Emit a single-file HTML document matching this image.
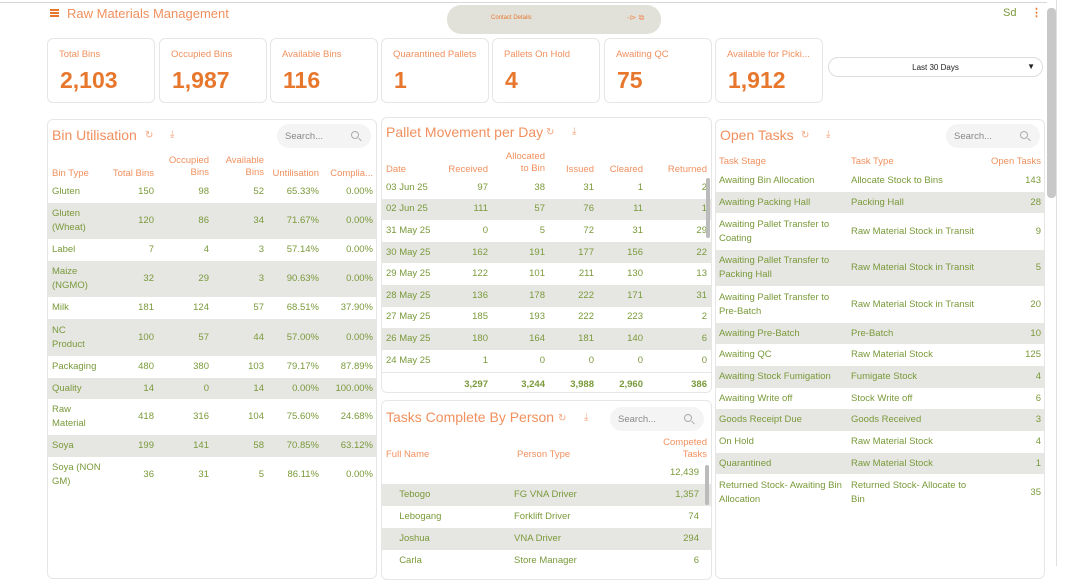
<!DOCTYPE html>
<html><head><meta charset="utf-8"><style>
*{box-sizing:border-box;margin:0;padding:0}
body{width:1069px;height:566px;overflow:hidden;background:#fff;font-family:"Liberation Sans",sans-serif;position:relative;color:#7a9a3a;font-size:9.5px}
.a{position:absolute}
.o{color:#f0905e}
.card{position:absolute;top:38px;height:65px;border:1px solid #e6e6e6;border-radius:6px;background:#fff}
.card .l{position:absolute;left:11px;top:10px;font-size:9.5px;color:#f0905e;white-space:nowrap}
.card .n{position:absolute;left:12px;top:28px;font-size:23px;font-weight:bold;color:#e8772e}
.panel{position:absolute;border:1px solid #e6e6e6;border-radius:6px;background:#fff;overflow:hidden}
.title{position:absolute;font-size:14px;color:#f0905e}
.search{position:absolute;width:94px;height:24px;border-radius:12px;background:#f4f4f4;font-size:9.5px;color:#888;padding:7px 0 0 8px}
.search:after{content:"";position:absolute;right:12px;top:7px;width:6px;height:6px;border:1px solid #aaa;border-radius:50%}
.search:before{content:"";position:absolute;right:9px;top:15px;width:4px;height:1px;background:#aaa;transform:rotate(45deg)}
.row{position:absolute;left:0;right:0}
.g{background:#e6e6e3}
.c{position:absolute;white-space:nowrap;line-height:14px}
.h{color:#f0905e}
.ic{position:absolute;font-size:10px;color:#f4a27a}
.ham{position:absolute;left:50px;width:9px;height:2px;background:#e8772e}
</style></head><body>
<div class="a" style="left:0;top:2px;width:1047px;height:1px;background:#d8d8d8"></div>
<div class="ham" style="top:9px"></div><div class="ham" style="top:12px"></div><div class="ham" style="top:15px"></div>
<div class="a o" style="left:67px;top:6px;font-size:13px">Raw Materials Management</div>
<div class="a" style="left:447px;top:5px;width:214px;height:29px;border-radius:14px;background:#e1e1d9"></div>
<div class="a" style="left:491px;top:15px;font-size:6px;color:#e8772e">Contact Details</div>
<div class="a" style="left:627px;top:13px;font-size:8px;color:#f0905e">-⊳ ⧉</div>
<div class="a" style="left:1003px;top:7px;font-size:11px;color:#7a9a3a">Sd</div>
<div class="a" style="left:1031px;top:6px;font-size:11px;color:#e8772e;font-weight:bold">⋮</div>
<div class="a" style="left:1047px;top:8px;width:9px;height:190px;background:#c8c8c8;border-radius:4px"></div>
<div class="a" style="left:1056px;top:0;width:1px;height:566px;background:#e0e0e0"></div>

<div class="card" style="left:47px;width:108px"><div class="l">Total Bins</div><div class="n">2,103</div></div>
<div class="card" style="left:159px;width:108px"><div class="l">Occupied Bins</div><div class="n">1,987</div></div>
<div class="card" style="left:270px;width:108px"><div class="l">Available Bins</div><div class="n">116</div></div>
<div class="card" style="left:381px;width:108px"><div class="l">Quarantined Pallets</div><div class="n">1</div></div>
<div class="card" style="left:492px;width:108px"><div class="l">Pallets On Hold</div><div class="n">4</div></div>
<div class="card" style="left:604px;width:108px"><div class="l">Awaiting QC</div><div class="n">75</div></div>
<div class="card" style="left:715px;width:108px"><div class="l">Available for Picki...</div><div class="n">1,912</div></div>
<div class="a" style="left:828px;top:57px;width:215px;height:20px;border:1px solid #ddd;border-radius:10px;font-size:8px;color:#222;text-align:center;padding-top:5px">Last 30 Days<span style="position:absolute;right:7px;top:4px;font-size:8px">&#9660;</span></div>

<div class="panel" style="left:47px;top:119px;width:330px;height:460px">
<div class="title" style="left:4px;top:7px">Bin Utilisation</div>
<div class="ic" style="left:97px;top:10px">↻</div><div class="ic" style="left:122px;top:9px">⤓</div>
<div class="search" style="left:229px;top:4px">Search...</div>
<div class="c h" style="left:4px;top:47px">Bin Type</div>
<div class="c h" style="right:222px;top:47px;text-align:right">Total Bins</div>
<div class="c h" style="right:167px;top:35px;line-height:12px;text-align:right">Occupied<br>Bins</div>
<div class="c h" style="right:112px;top:35px;line-height:12px;text-align:right">Available<br>Bins</div>
<div class="c h" style="right:57px;top:47px">Untilisation</div>
<div class="c h" style="right:3px;top:47px">Complia...</div>
<div id="bu"></div>
</div>

<div class="panel" style="left:381px;top:117px;width:331px;height:276px">
<div class="title" style="left:4px;top:6px">Pallet Movement per Day</div>
<div class="ic" style="left:164px;top:9px">↻</div><div class="ic" style="left:190px;top:8px">⤓</div>
<div class="c h" style="left:4px;top:45px">Date</div>
<div class="c h" style="right:223px;top:45px">Received</div>
<div class="c h" style="right:166px;top:33px;line-height:12px;text-align:right">Allocated<br>to Bin</div>
<div class="c h" style="right:117px;top:45px">Issued</div>
<div class="c h" style="right:68px;top:45px">Cleared</div>
<div class="c h" style="right:4px;top:45px">Returned</div>
<div id="pm"></div>
<div class="a" style="left:0;right:0;top:254px;height:1px;background:#e6e6e6"></div>
<div class="a" style="left:0;right:0;top:260px;height:14px;font-weight:bold">
<div class="c" style="right:223px">3,297</div><div class="c" style="right:166px">3,244</div><div class="c" style="right:117px">3,988</div><div class="c" style="right:68px">2,960</div><div class="c" style="right:4px">386</div></div>
<div class="a" style="left:324px;top:60px;width:4px;height:60px;background:#bbb;border-radius:2px"></div>
</div>

<div class="panel" style="left:381px;top:400px;width:331px;height:180px">
<div class="title" style="left:4px;top:8px">Tasks Complete By Person</div>
<div class="ic" style="left:176px;top:12px">↻</div><div class="ic" style="left:202px;top:11px">⤓</div>
<div class="search" style="left:228px;top:6px">Search...</div>
<div class="c h" style="left:4px;top:47px">Full Name</div>
<div class="c h" style="left:135px;top:47px">Person Type</div>
<div class="c h" style="right:4px;top:36px;line-height:12px;text-align:right">Competed<br>Tasks</div>
<div class="c" style="right:12px;top:65px">12,439</div>
<div id="tc"></div>
<div class="a" style="left:323px;top:64px;width:4px;height:40px;background:#bbb;border-radius:2px"></div>
</div>

<div class="panel" style="left:715px;top:119px;width:330px;height:460px">
<div class="title" style="left:4px;top:7px">Open Tasks</div>
<div class="ic" style="left:85px;top:10px">↻</div><div class="ic" style="left:110px;top:9px">⤓</div>
<div class="search" style="left:230px;top:4px">Search...</div>
<div class="c h" style="left:3px;top:35px">Task Stage</div>
<div class="c h" style="left:135px;top:35px">Task Type</div>
<div class="c h" style="right:3px;top:35px">Open Tasks</div>
<div id="ot"></div>
</div>

<script>
function rows(id,data,cols,y0,gStart){
 var h='',y=y0;
 data.forEach(function(d,i){
  var ht=d[0];var g=(i%2==gStart)?' g':'';
  h+='<div class="row'+g+'" style="top:'+y+'px;height:'+ht+'px">';
  cols.forEach(function(c,j){
   var v=d[j+1];var st='top:'+((ht-(v.indexOf('<br>')>=0?28:14))/2)+'px;';
   st+=c[0]=='l'?'left:'+c[1]+'px':'right:'+c[1]+'px;text-align:right';
   h+='<div class="c" style="'+st+'">'+v+'</div>';
  });
  h+='</div>';y+=ht;
 });
 document.getElementById(id).innerHTML=h;
}
rows('bu',[
[22,'Gluten','150','98','52','65.33%','0.00%'],
[36,'Gluten<br>(Wheat)','120','86','34','71.67%','0.00%'],
[22,'Label','7','4','3','57.14%','0.00%'],
[36,'Maize<br>(NGMO)','32','29','3','90.63%','0.00%'],
[22,'Milk','181','124','57','68.51%','37.90%'],
[37,'NC<br>Product','100','57','44','57.00%','0.00%'],
[22,'Packaging','480','380','103','79.17%','87.89%'],
[21,'Quality','14','0','14','0.00%','100.00%'],
[36,'Raw<br>Material','418','316','104','75.60%','24.68%'],
[22,'Soya','199','141','58','70.85%','63.12%'],
[36,'Soya (NON<br>GM)','36','31','5','86.11%','0.00%']
],[['l',4],['r',222],['r',167],['r',112],['r',57],['r',3]],61,1);
rows('pm',[
[21.6,'03 Jun 25','97','38','31','1','2'],
[21.6,'02 Jun 25','111','57','76','11','1'],
[21.6,'31 May 25','0','5','72','31','29'],
[21.6,'30 May 25','162','191','177','156','22'],
[21.6,'29 May 25','122','101','211','130','13'],
[21.6,'28 May 25','136','178','222','171','31'],
[21.6,'27 May 25','185','193','222','223','2'],
[21.6,'26 May 25','180','164','181','140','6'],
[21.6,'24 May 25','1','0','0','0','0']
],[['l',4],['r',223],['r',166],['r',117],['r',68],['r',4]],59,1);
rows('tc',[
[22,'&nbsp;&nbsp;&nbsp;&nbsp;&nbsp;Tebogo','FG VNA Driver','1,357'],
[22,'&nbsp;&nbsp;&nbsp;&nbsp;&nbsp;Lebogang','Forklift Driver','74'],
[22,'&nbsp;&nbsp;&nbsp;&nbsp;&nbsp;Joshua','VNA Driver','294'],
[22,'&nbsp;&nbsp;&nbsp;&nbsp;&nbsp;Carla','Store Manager','6']
],[['l',4],['l',132],['r',12]],83,0);
rows('ot',[
[22,'Awaiting Bin Allocation','Allocate Stock to Bins','143'],
[21,'Awaiting Packing Hall','Packing Hall','28'],
[37,'Awaiting Pallet Transfer to<br>Coating','Raw Material Stock in Transit','9'],
[36,'Awaiting Pallet Transfer to<br>Packing Hall','Raw Material Stock in Transit','5'],
[37,'Awaiting Pallet Transfer to<br>Pre-Batch','Raw Material Stock in Transit','20'],
[21,'Awaiting Pre-Batch','Pre-Batch','10'],
[22,'Awaiting QC','Raw Material Stock','125'],
[22,'Awaiting Stock Fumigation','Fumigate Stock','4'],
[21,'Awaiting Write off','Stock Write off','6'],
[22,'Goods Receipt Due','Goods Received','3'],
[22,'On Hold','Raw Material Stock','4'],
[21,'Quarantined','Raw Material Stock','1'],
[37,'Returned Stock- Awaiting Bin<br>Allocation','Returned Stock- Allocate to<br>Bin','35']
],[['l',3],['l',135],['r',3]],50,1);
</script>
</body></html>
